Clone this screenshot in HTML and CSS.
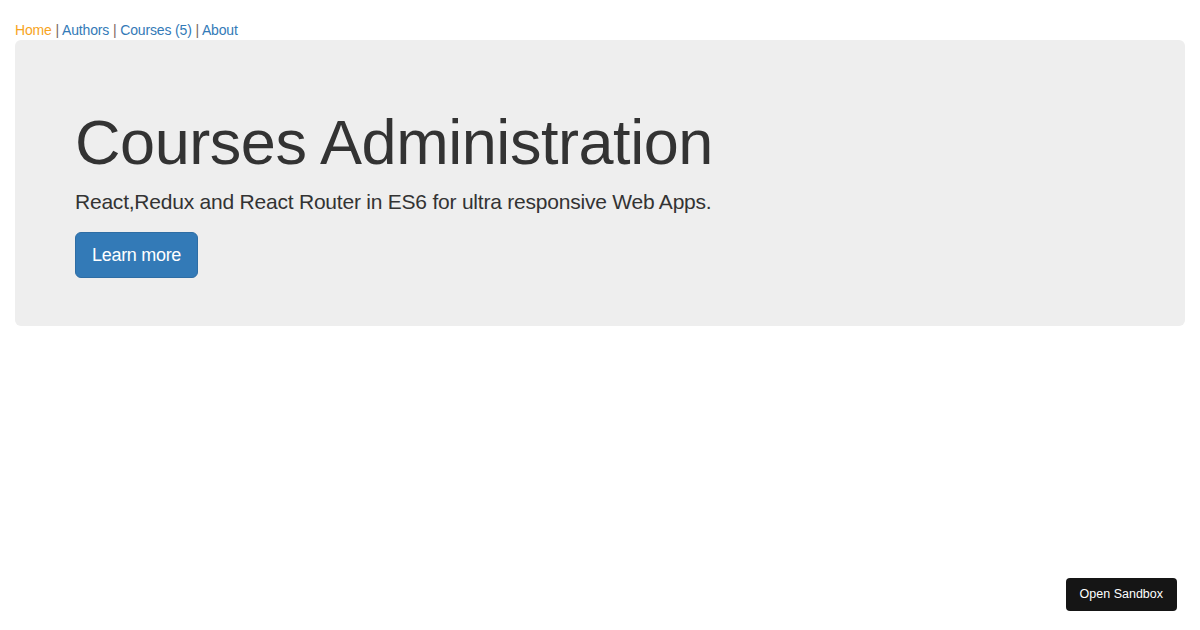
FILE: index.html
```html
<!DOCTYPE html>
<html lang="en">
<head>
    <meta charset="UTF-8">
    <meta name="viewport" content="width=device-width, initial-scale=1.0">
    <title>Courses Administration</title>
    <link rel="stylesheet" href="styles.css">
</head>
<body>

    <div class="container-fluid">
        <!-- top navigation -->
        <nav class="nav">
            <a href="#" class="active">Home</a>
            <span class="sep">|</span> <a href="#">Authors</a>
            <span class="sep">|</span> <a href="#">Courses (5)</a>
            <span class="sep">|</span> <a href="#">About</a>
        </nav>

        <!-- hero -->
        <div class="jumbotron">
            <h1>Courses Administration</h1>
            <p>React,Redux and React Router in ES6 for ultra responsive Web Apps.</p>
            <a href="#" class="btn btn-primary btn-lg">Learn more</a>
        </div>
    </div>

    <a href="#" class="sandbox-btn">Open Sandbox</a>

</body>
</html>
```

FILE: styles.css
```css
body {
    margin: 0;
    padding: 0;
    font-family: "Liberation Sans", Arial, sans-serif;
    font-size: 14px;
    line-height: 1.42857143;
    color: #333;
    background-color: #fff;
}

a {
    color: #337ab7;
    text-decoration: none;
}

.container-fluid {
    padding: 20px 15px 0;
}

/* top navigation */
.nav {
    height: 20px;
    letter-spacing: -0.15px;
}

.nav a.active {
    color: #f7a41d;
}

.nav .sep {
    color: #7a675e;
}

/* hero */
.jumbotron {
    background-color: #eee;
    border-radius: 6px;
    padding: 48px 60px;
}

.jumbotron h1 {
    margin: 20px 0 10px;
    font-size: 63px;
    font-weight: 500;
    line-height: 1.1;
    letter-spacing: -0.45px;
    color: inherit;
}

.jumbotron p {
    margin: 0 0 15px;
    font-size: 21px;
    font-weight: 200;
    letter-spacing: -0.22px;
}

.btn {
    display: inline-block;
    border: 1px solid transparent;
    cursor: pointer;
}

.btn-primary {
    color: #fff;
    background-color: #337ab7;
    border-color: #2e6da4;
}

.btn-lg {
    padding: 10px 16px;
    font-size: 18px;
    line-height: 1.3333333;
    letter-spacing: -0.3px;
    border-radius: 6px;
}

/* floating sandbox button */
.sandbox-btn {
    position: fixed;
    right: 23px;
    bottom: 19px;
    padding: 8px 14px;
    font-size: 12.5px;
    line-height: 17px;
    color: #fff;
    background-color: #151515;
    border-radius: 4px;
}
```
